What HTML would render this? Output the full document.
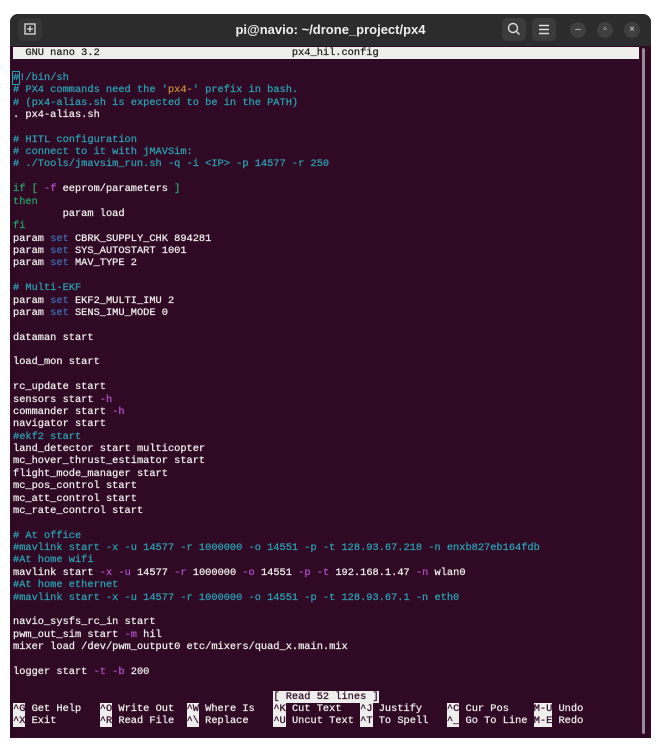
<!DOCTYPE html>
<html><head><meta charset="utf-8"><style>
html,body{margin:0;padding:0;background:#fff;width:661px;height:750px;overflow:hidden}
#win{position:absolute;left:10px;top:14px;width:641px;height:724px;background:#300a24;border-radius:8px 8px 0 0;overflow:hidden}
#tb{position:absolute;left:0;top:0;width:641px;height:32px;background:#2c2c2c;color:#eee;font:bold 13px "Liberation Sans",sans-serif}
#tb .t{position:absolute;left:0;right:0;top:8px;text-align:center}
.btn{position:absolute;top:4px;width:24px;height:23px;border-radius:5px;background:#3b3b3b}
.cb{position:absolute;top:8px;width:16px;height:16px;border-radius:50%;background:#3f3f3f;color:#ddd;font:10px "Liberation Sans",sans-serif;text-align:center;line-height:16px}
pre{position:absolute;left:3px;top:33px;margin:0;font:10.33px/12.375px "Liberation Mono",monospace;color:#eeeeec;-webkit-text-stroke:0.25px}
.c{color:#2aa1b3}.g{color:#26a269}.s{color:#3d6bb3}.f{color:#b050c8}.o{color:#c58a3a}
.i{background:#eeeeec;color:#300a24}
.hd{display:inline-block;width:626px;background:#eeeeec;color:#222}
.cur{outline:1px solid #2aa1b3}
#sb{position:absolute;left:632px;top:34px;width:3px;height:686px;background:#9a8a95;border-radius:2px}
</style></head><body>
<div id="win">
<div id="tb">
<div class="btn" style="left:8px;background:#353535"><svg width="24" height="23"><rect x="7" y="6" width="10" height="10" fill="none" stroke="#ddd" stroke-width="1.3"/><path d="M12 8v6M9 11h6" stroke="#ddd" stroke-width="1.3"/></svg></div>
<div class="t">pi@navio: ~/drone_project/px4</div>
<div class="btn" style="left:492px"><svg width="24" height="23"><circle cx="11" cy="10" r="4.5" fill="none" stroke="#ddd" stroke-width="1.4"/><path d="M14.5 13.5l3 3" stroke="#ddd" stroke-width="1.4"/></svg></div>
<div class="btn" style="left:522px"><svg width="24" height="23"><path d="M7 7.5h10M7 11.5h10M7 15.5h10" stroke="#ddd" stroke-width="1.4"/></svg></div>
<div class="cb" style="left:560px">–</div>
<div class="cb" style="left:587px">▫</div>
<div class="cb" style="left:614px">×</div>
</div>
<pre><span class="hd">  GNU nano 3.2                               px4_hil.config                     </span>

<span class="c"><span class="cur">#</span>!/bin/sh
# PX4 commands need the '<span class="o">px4-</span>' prefix in bash.
# (px4-alias.sh is expected to be in the PATH)</span>
. px4-alias.sh

<span class="c"># HITL configuration
# connect to it with jMAVSim:
# ./Tools/jmavsim_run.sh -q -i &lt;IP&gt; -p 14577 -r 250</span>

<span class="g">if [ </span><span class="f">-f</span> eeprom/parameters <span class="g">]</span>
<span class="g">then</span>
        param load
<span class="g">fi</span>
param <span class="s">set</span> CBRK_SUPPLY_CHK 894281
param <span class="s">set</span> SYS_AUTOSTART 1001
param <span class="s">set</span> MAV_TYPE 2

<span class="c"># Multi-EKF</span>
param <span class="s">set</span> EKF2_MULTI_IMU 2
param <span class="s">set</span> SENS_IMU_MODE 0

dataman start

load_mon start

rc_update start
sensors start <span class="f">-h</span>
commander start <span class="f">-h</span>
navigator start
<span class="c">#ekf2 start</span>
land_detector start multicopter
mc_hover_thrust_estimator start
flight_mode_manager start
mc_pos_control start
mc_att_control start
mc_rate_control start

<span class="c"># At office
#mavlink start -x -u 14577 -r 1000000 -o 14551 -p -t 128.93.67.218 -n enxb827eb164fdb
#At home wifi</span>
mavlink start <span class="f">-x -u</span> 14577 <span class="f">-r</span> 1000000 <span class="f">-o</span> 14551 <span class="f">-p -t</span> 192.168.1.47 <span class="f">-n</span> wlan0
<span class="c">#At home ethernet
#mavlink start -x -u 14577 -r 1000000 -o 14551 -p -t 128.93.67.1 -n eth0</span>

navio_sysfs_rc_in start
pwm_out_sim start <span class="f">-m</span> hil
mixer load /dev/pwm_output0 etc/mixers/quad_x.main.mix

logger start <span class="f">-t -b</span> 200

                                          <span class="i">[ Read 52 lines ]</span>
<span class="i">^G</span> Get Help   <span class="i">^O</span> Write Out  <span class="i">^W</span> Where Is   <span class="i">^K</span> Cut Text   <span class="i">^J</span> Justify    <span class="i">^C</span> Cur Pos    <span class="i">M-U</span> Undo
<span class="i">^X</span> Exit       <span class="i">^R</span> Read File  <span class="i">^\</span> Replace    <span class="i">^U</span> Uncut Text <span class="i">^T</span> To Spell   <span class="i">^_</span> Go To Line <span class="i">M-E</span> Redo</pre>
<div id="sb"></div>
</div>
</body></html>
